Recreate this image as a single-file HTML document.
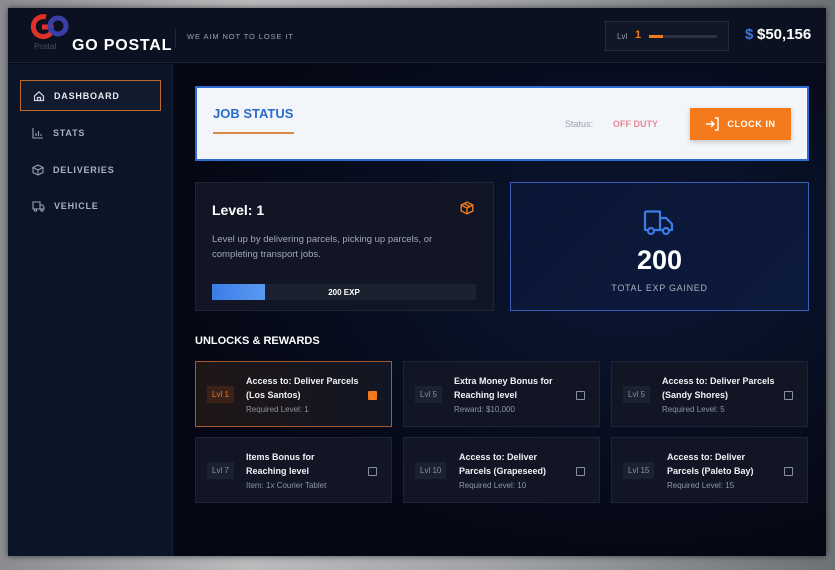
<!DOCTYPE html>
<html><head><style>
*{box-sizing:border-box;margin:0;padding:0}
body{width:835px;height:570px;overflow:hidden;font-family:"Liberation Sans",sans-serif;background:linear-gradient(90deg,#8a8c8f,#b9bbbd 30%,#a0a2a5 60%,#6f7275);position:relative}
.panel{position:absolute;left:8px;top:8px;width:818px;height:548px;background:#060a18;box-shadow:0 0 6px rgba(0,0,0,.6)}
.hdr{position:absolute;left:0;top:0;width:818px;height:55px;background:#0b1120;border-bottom:1px solid #1b2335}
.side{position:absolute;left:0;top:56px;width:165px;height:492px;background:#0c1428;border-right:1px solid #182035}
.main{position:absolute;left:166px;top:56px;width:652px;height:492px;background:radial-gradient(ellipse at 70% 40%,#0b1733,#050814 70%)}
.abs{position:absolute}
.nav{position:absolute;left:12px;width:141px;height:31px;color:#aab0bd;font-size:9px;font-weight:bold;letter-spacing:.8px;display:flex;align-items:center;padding-left:12px;gap:9px}
.card{position:absolute;background:#111524;border:1px solid #1f2536}
.rw{position:absolute;width:197px;height:66px;background:#121624;border:1px solid #1f2536}
.rw .lv{position:absolute;left:11px;top:24px;height:17px;padding:0 5px;background:#1c2130;color:#8a90a0;font-size:8px;line-height:17px}
.rw .t{position:absolute;left:50px;top:12px;color:#f0f2f6;font-size:9px;font-weight:bold;line-height:14px;width:118px}
.rw .s{position:absolute;left:50px;top:43px;color:#8e94a2;font-size:8px}
.rw .cb{position:absolute;right:14px;top:29px;width:9px;height:9px;border:1.5px solid #8a90a0;border-radius:1px}
</style></head><body>
<div class="panel">
 <div class="hdr">
  <svg class="abs" style="left:22px;top:5px" width="40" height="28" viewBox="0 0 40 28"><path d="M16 4 A10 10 0 1 0 21 20 L21 14 L12 14" fill="none" stroke="#e0302a" stroke-width="5"/><circle cx="28" cy="13" r="8" fill="none" stroke="#3a3fa8" stroke-width="5"/></svg>
  <div class="abs" style="left:26px;top:34px;font-size:8px;color:#4a5163">Postal</div>
  <div class="abs" style="left:64px;top:29px;font-size:16px;font-weight:bold;color:#fff;letter-spacing:.8px">GO POSTAL</div>
  <div class="abs" style="left:167px;top:20px;width:1px;height:20px;background:#1f2738"></div>
  <div class="abs" style="left:179px;top:24px;font-size:7.5px;color:#9aa0ad;letter-spacing:.9px">WE AIM NOT TO LOSE IT</div>
  <div class="abs" style="left:597px;top:13px;width:124px;height:30px;background:#101626;border:1px solid #232a3b"></div>
  <div class="abs" style="left:609px;top:24px;font-size:8px;color:#9aa0ad">Lvl</div>
  <div class="abs" style="left:627px;top:21px;font-size:11px;font-weight:bold;color:#f07a20">1</div>
  <div class="abs" style="left:641px;top:27px;width:68px;height:3px;background:#2a3142"><div style="width:14px;height:3px;background:#f07a20"></div></div>
  <div class="abs" style="left:737px;top:18px;font-size:15px;font-weight:bold;color:#3b78e7">$</div>
  <div class="abs" style="left:749px;top:18px;font-size:15px;font-weight:bold;color:#fff">$50,156</div>
 </div>
 <div class="side">
  <div class="nav" style="top:16px;border:1px solid #c0692e;background:#121a2e;color:#e8ebf0"><svg width="12" height="12" viewBox="0 0 12 12" fill="none" stroke="#d0d4dc" stroke-width="1.2"><path d="M1.5 6 L6 1.8 L10.5 6 V10.5 H1.5Z M4.5 10.5 V7.5 H7.5 V10.5"/></svg>DASHBOARD</div>
  <div class="nav" style="top:53px"><svg width="12" height="12" viewBox="0 0 12 12" fill="none" stroke="#9aa0ad" stroke-width="1.1"><path d="M1 1 V11 H11 M4 9 V6 M6.5 9 V4 M9 9 V7"/></svg>STATS</div>
  <div class="nav" style="top:90px"><svg width="12" height="12" viewBox="0 0 12 12" fill="none" stroke="#9aa0ad" stroke-width="1.1"><path d="M6 1 L11 3.5 V8.5 L6 11 L1 8.5 V3.5Z M1 3.5 L6 6 L11 3.5 M6 6 V11"/></svg>DELIVERIES</div>
  <div class="nav" style="top:126px"><svg width="13" height="12" viewBox="0 0 13 12" fill="none" stroke="#9aa0ad" stroke-width="1.1"><path d="M1 2 H8 V9 H1Z M8 5 H10.5 L12 7 V9 H8"/><circle cx="3.5" cy="10" r="1.2"/><circle cx="10" cy="10" r="1.2"/></svg>VEHICLE</div>
 </div>
 <div class="main"></div>
 <div class="abs" style="left:187px;top:78px;width:614px;height:75px;background:#f2f5f9;border:2px solid #2d6bd0"></div>
 <div class="abs" style="left:205px;top:98px;font-size:13px;font-weight:bold;color:#2a6cc8">JOB STATUS</div>
 <div class="abs" style="left:205px;top:124px;width:81px;height:2px;background:#d88a45"></div>
 <div class="abs" style="left:557px;top:111px;font-size:9px;color:#9aa0ad">Status:</div>
 <div class="abs" style="left:605px;top:111px;font-size:9px;font-weight:bold;color:#e88a96">OFF DUTY</div>
 <div class="abs" style="left:682px;top:100px;width:101px;height:32px;background:#f57a1c;box-shadow:0 2px 5px rgba(0,0,0,.2);color:#fff;font-size:9px;font-weight:bold;letter-spacing:.6px;display:flex;align-items:center;justify-content:center;gap:7px"><svg width="15" height="14" viewBox="0 0 15 14" fill="none" stroke="#fff" stroke-width="1.4"><path d="M1 7 H9 M6 4 L9 7 L6 10 M10 1 H13 V13 H10"/></svg>CLOCK IN</div>
 <div class="card" style="left:187px;top:174px;width:299px;height:129px"></div>
 <div class="abs" style="left:204px;top:194px;font-size:14px;font-weight:bold;color:#fff">Level: 1</div>
 <svg class="abs" style="left:452px;top:193px" width="14" height="14" viewBox="0 0 12 12" fill="none" stroke="#f07a20" stroke-width="1.2"><path d="M6 1 L11 3.5 V8.5 L6 11 L1 8.5 V3.5Z M1 3.5 L6 6 L11 3.5 M6 6 V11 M3.5 2.2 L8.5 4.8"/></svg>
 <div class="abs" style="left:204px;top:224px;width:250px;font-size:9.5px;line-height:15px;color:#a2a8b4">Level up by delivering parcels, picking up parcels, or completing transport jobs.</div>
 <div class="abs" style="left:204px;top:276px;width:264px;height:16px;background:#1c2130"></div>
 <div class="abs" style="left:204px;top:276px;width:53px;height:16px;background:linear-gradient(90deg,#3a7ce8,#5a9af0)"></div>
 <div class="abs" style="left:204px;top:280px;width:264px;text-align:center;font-size:8px;font-weight:bold;color:#fff">200 EXP</div>
 <div class="abs" style="left:502px;top:174px;width:299px;height:129px;border:1px solid #3b5fb8;background:linear-gradient(135deg,#0a1636,#0c1a3c)"></div>
 <svg class="abs" style="left:635px;top:202px" width="32" height="26" viewBox="0 0 32 26" fill="none" stroke="#3c7ae6" stroke-width="2.2" stroke-linejoin="round"><path d="M2 3 Q2 1.5 3.5 1.5 H17 V20 H2Z M17 8 H23 L29 14 V20 H17"/><circle cx="8" cy="21" r="3" fill="#0b1838"/><circle cx="23" cy="21" r="3" fill="#0b1838"/></svg>
 <div class="abs" style="left:502px;top:237px;width:299px;text-align:center;font-size:27px;font-weight:bold;color:#fff">200</div>
 <div class="abs" style="left:502px;top:275px;width:299px;text-align:center;font-size:9px;color:#a8b0c0;letter-spacing:.7px">TOTAL EXP GAINED</div>
 <div class="abs" style="left:187px;top:327px;font-size:11px;font-weight:bold;color:#fff">UNLOCKS &amp; REWARDS</div>
 <div class="rw" style="left:187px;top:353px;border-color:#a8582a;background:linear-gradient(90deg,#1f1616,#121624)"><div class="lv" style="background:#3a2218;color:#f07a20">Lvl 1</div><div class="t">Access to: Deliver Parcels (Los Santos)</div><div class="s">Required Level: 1</div><div class="cb" style="background:#f07a20;border-color:#f07a20"></div></div>
 <div class="rw" style="left:395px;top:353px"><div class="lv">Lvl 5</div><div class="t">Extra Money Bonus for Reaching level</div><div class="s">Reward: $10,000</div><div class="cb"></div></div>
 <div class="rw" style="left:603px;top:353px"><div class="lv">Lvl 5</div><div class="t">Access to: Deliver Parcels (Sandy Shores)</div><div class="s">Required Level: 5</div><div class="cb"></div></div>
 <div class="rw" style="left:187px;top:429px"><div class="lv">Lvl 7</div><div class="t" style="width:90px">Items Bonus for Reaching level</div><div class="s">Item: 1x Courier Tablet</div><div class="cb"></div></div>
 <div class="rw" style="left:395px;top:429px"><div class="lv">Lvl 10</div><div class="t" style="left:55px;width:100px">Access to: Deliver Parcels (Grapeseed)</div><div class="s" style="left:55px">Required Level: 10</div><div class="cb"></div></div>
 <div class="rw" style="left:603px;top:429px"><div class="lv">Lvl 15</div><div class="t" style="left:55px;width:100px">Access to: Deliver Parcels (Paleto Bay)</div><div class="s" style="left:55px">Required Level: 15</div><div class="cb"></div></div>
</div>
</body></html>
